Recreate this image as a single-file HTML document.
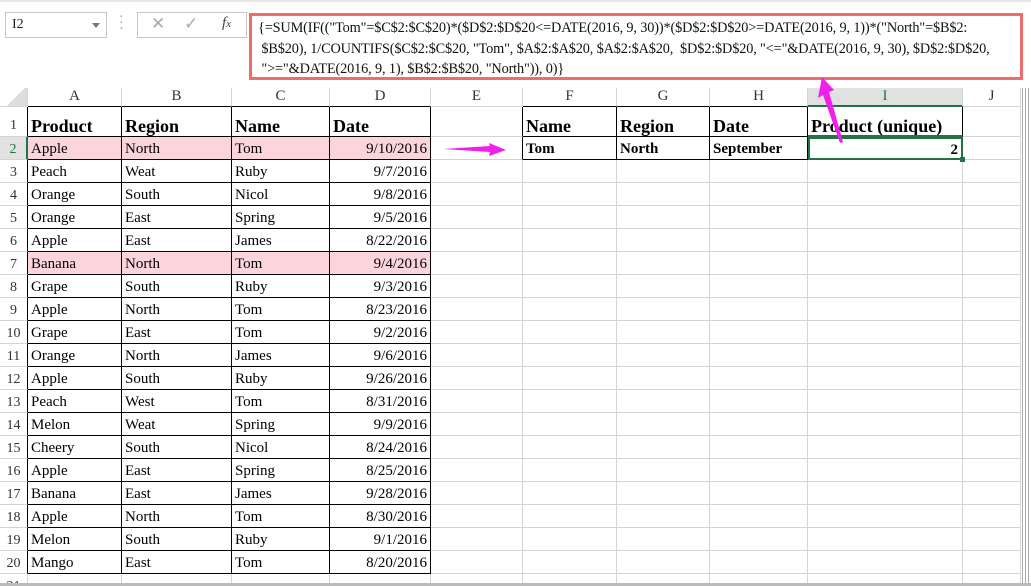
<!DOCTYPE html>
<html><head><meta charset="utf-8"><style>
*{box-sizing:border-box;margin:0;padding:0}
html,body{width:1031px;height:586px;overflow:hidden}
body{background:#fff;position:relative;font-family:"Liberation Serif",serif;color:#000}
.top{position:absolute;left:0;top:0;width:1031px;height:2px;background:#e6e6e6}
.nb{position:absolute;left:5px;top:12px;width:102px;height:26px;border:1px solid #c6c6c6;font-size:14px;padding:4px 6px;color:#222}
.nb:after{content:"";position:absolute;right:6px;top:10px;border:4px solid transparent;border-top:5px solid #777}
.dots{position:absolute;left:119px;top:15px;color:#999;font-size:14px;line-height:6px;width:4px}
.fx{position:absolute;left:137px;top:12px;width:110px;height:26px;border:1px solid #c6c6c6;background:#fff;font-size:17px;color:#aaa}
.fb{position:absolute;left:249px;top:13px;width:774px;height:67px;border:3px solid #f06c6c;font-size:14.3px;line-height:20.5px;padding:2px 0 0 6px;color:#111;letter-spacing:-0.15px}
.grid{position:absolute;left:0;top:88px;height:495px;overflow:hidden}
.r{display:flex;height:23px}
.c{height:100%;border-right:1px solid #d4d4d4;border-bottom:1px solid #d4d4d4;font-size:15px;padding:4px 3px 0;white-space:nowrap;overflow:hidden}
.h{text-align:center;font-size:15px;color:#333;padding-top:0}
.rh{text-align:center;font-size:14px;color:#333;padding:5px 0 0}
.rt{text-align:right}
.bk{border-right-color:#000;border-bottom-color:#000}
.br{border-right-color:#000}
.bb{border-bottom-color:#000}
.pk{background:#fcd4dc}
.b1{font-weight:bold;font-size:18px;padding-top:9px}
.b2{font-weight:bold;font-size:15px}
.vs{position:absolute;top:88px;height:496px;width:1px;background:#aaa}
</style></head><body>
<div class="top"></div>
<div class="nb">I2</div>
<div class="dots">·<br>·<br>·</div>
<div class="fx"><span style="position:absolute;left:13px;top:1px">✕</span><span style="position:absolute;left:46px;top:1px">✓</span><span style="position:absolute;left:84px;top:2px;color:#444;font-style:italic;font-size:15px">f<span style="font-size:11px">x</span></span></div>
<div class="fb">{=SUM(IF(("Tom"=$C$2:$C$20)*($D$2:$D$20&lt;=DATE(2016, 9, 30))*($D$2:$D$20&gt;=DATE(2016, 9, 1))*("North"=$B$2:<br>&nbsp;$B$20), 1/COUNTIFS($C$2:$C$20, "Tom", $A$2:$A$20, $A$2:$A$20,&nbsp; $D$2:$D$20, "&lt;="&amp;DATE(2016, 9, 30), $D$2:$D$20,<br>&nbsp;"&gt;="&amp;DATE(2016, 9, 1), $B$2:$B$20, "North")), 0)}</div>
<div class="grid" id="g"></div>
<div class="vs" style="left:1022px"></div><div class="vs" style="left:1025px"></div><div class="vs" style="left:1028px"></div>
<div style="position:absolute;left:0;top:583px;width:1031px;height:3px;background:#bbb"></div>
<svg style="position:absolute;left:0;top:0" width="1031" height="586">
<polygon points="443,149 490,146 489,143 506,150 489,156 490,152" fill="#f020e8"/>
<polygon points="822,77 834,90 829,92 843,142 840,143 823,95 818,98" fill="#f020e8"/>
</svg>
<script>
var W=[28,94,110,98,101,92,94,93,98,155,58];
var L=["","A","B","C","D","E","F","G","H","I","J"];
var D=[["Apple","North","Tom","9/10/2016"],["Peach","Weat","Ruby","9/7/2016"],["Orange","South","Nicol","9/8/2016"],["Orange","East","Spring","9/5/2016"],["Apple","East","James","8/22/2016"],["Banana","North","Tom","9/4/2016"],["Grape","South","Ruby","9/3/2016"],["Apple","North","Tom","8/23/2016"],["Grape","East","Tom","9/2/2016"],["Orange","North","James","9/6/2016"],["Apple","South","Ruby","9/26/2016"],["Peach","West","Tom","8/31/2016"],["Melon","Weat","Spring","9/9/2016"],["Cheery","South","Nicol","8/24/2016"],["Apple","East","Spring","8/25/2016"],["Banana","East","James","9/28/2016"],["Apple","North","Tom","8/30/2016"],["Melon","South","Ruby","9/1/2016"],["Mango","East","Tom","8/20/2016"]];
var h='<div class="r" style="height:19px">';
for(var i=0;i<11;i++){var cl="c h";var st="width:"+W[i]+"px;";
if(i>=1&&i<=4||i>=6&&i<=9)cl+=" bb";
if(i==9)st+="background:#e1e1e1;border-bottom:2px solid #217346;color:#217346;";
if(i==0)st+="background:linear-gradient(135deg,#fff 55%,#ddd 55%);";
h+='<div class="'+cl+'" style="'+st+'">'+L[i]+'</div>';}
h+='</div>';
for(var r=1;r<=21;r++){var ht=r==1?30:23;h+='<div class="r" style="height:'+ht+'px">';
for(var i=0;i<11;i++){var cl="c",st="width:"+W[i]+"px;",t="";
if(i==0){cl+=" rh";t=r;if(r<=20)cl+=" br";if(r==1)st+="padding-top:11px;";if(r==2)st+="background:#e1e1e1;border-right:2px solid #217346;color:#217346;";}
else if(i<=4&&r<=20){cl+=" bk";if(r==1)cl+=" b1";else t=D[r-2][i-1];if(i==4&&r>1)cl+=" rt";if((r==2||r==7))cl+=" pk";if(r==1)t=["Product","Region","Name","Date"][i-1];}
else if(i==5&&r<=2){cl+=" br";}
else if(i>=6&&i<=9&&r<=2){cl+=" bk";if(r==1){cl+=" b1";t=["Name","Region","Date","Product (unique)"][i-6];}else{cl+=" b2";t=["Tom","North","September","2"][i-6];}}
if(i==9&&r==2){cl+=" rt";st+="border:2px solid #217346;position:relative;overflow:visible;padding-top:3px;";t+='<span style="position:absolute;right:-4px;bottom:-4px;width:5px;height:5px;background:#217346"></span>';}
if(i==9&&r==1)st+="border-bottom:2px solid #217346;";
h+='<div class="'+cl+'" style="'+st+'">'+t+'</div>';}
h+='</div>';}
document.getElementById("g").innerHTML=h;
</script>
</body></html>
